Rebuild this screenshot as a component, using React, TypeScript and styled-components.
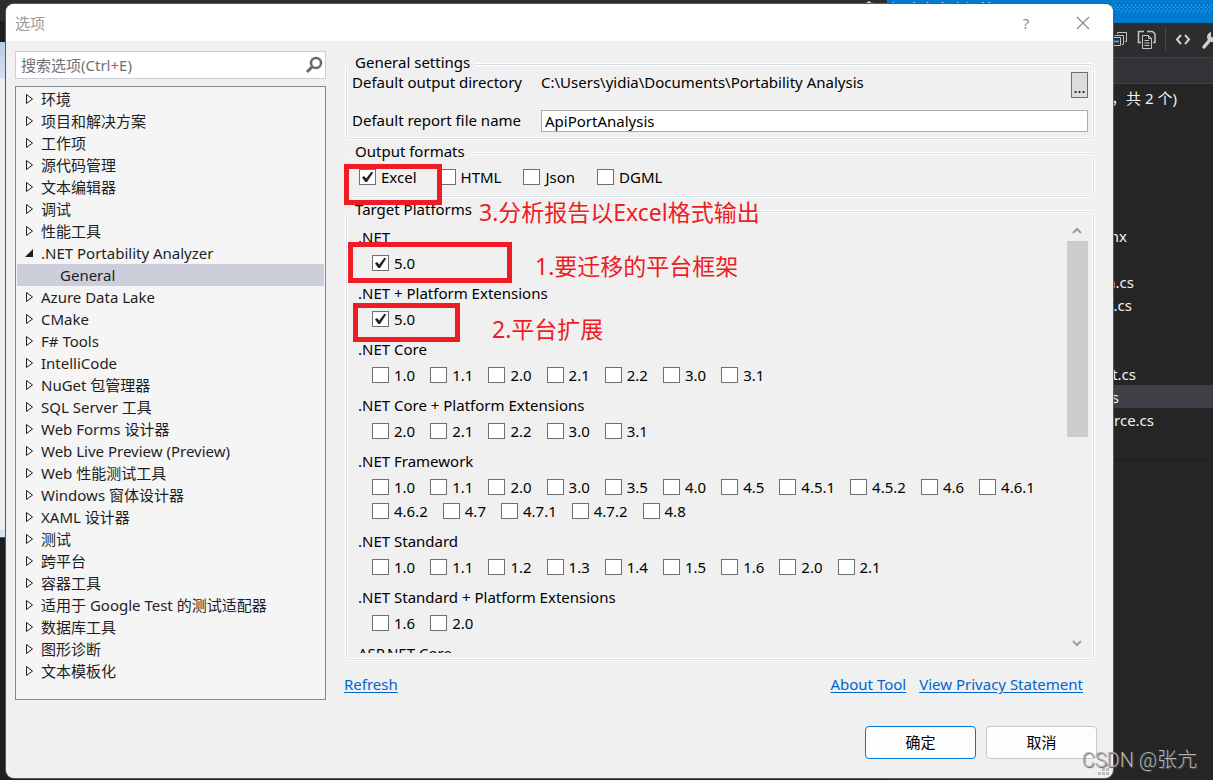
import React from "react";
import styled, { createGlobalStyle } from "styled-components";

const GlobalStyle = createGlobalStyle`
  * { box-sizing: border-box; }
  body {
    margin: 0;
    background: #1e1e1e;
    font: 15px/20px "Noto Sans", "Noto Sans CJK SC", sans-serif;
    color: #000;
  }
  button, input { font: inherit; color: inherit; }
`;

/* ---------- window behind the dialog ---------- */

const Desktop = styled.div`
  position: relative;
  display: flex;
  height: 100vh;
  min-height: 780px;
  overflow: hidden;
  background: #1e1e1e;
`;

const EditorEdge = styled.div`
  flex: 1;
  display: flex;
  flex-direction: column;
`;

const EdgeBand = styled.div<{ $h: number; $bg: string }>`
  height: ${(p) => p.$h}px;
  background: ${(p) => p.$bg};
`;

const GearSlot = styled.div`
  display: flex;
  justify-content: flex-end;
  height: 21px;
  padding-right: 11px;
  background: #2d2d30;
`;

const Explorer = styled.aside`
  width: 326px;
  display: flex;
  flex-direction: column;
  background: #252526;
  color: #f1f1f1;
`;

const ExplorerTitle = styled.div`
  display: flex;
  gap: 6px;
  height: 23px;
  padding-left: 3px;
  line-height: 18px;
  background: #007acc;
  color: #fff;
`;

const Grip = styled.div`
  flex: 1;
  height: 7px;
  margin-top: 5px;
  line-height: 0;
`;

const ExplorerTools = styled.div`
  display: flex;
  justify-content: flex-end;
  align-items: center;
  height: 35px;
  background: #2d2d30;
  border-bottom: 1px solid #3f3f46;
`;

const ExplorerSearch = styled.div`
  height: 26px;
  background: #333337;
  border-bottom: 1px solid #3f3f46;
`;

const FileList = styled.ul`
  list-style: none;
  margin: 0;
  padding: 2px 0 0;
  height: 376px;
  border-bottom: 1px solid #1b1b1c;
`;

const FileRow = styled.li<{ $end: number; $selected?: boolean }>`
  display: flex;
  justify-content: flex-end;
  height: 23px;
  line-height: 25px;
  padding-right: ${(p) => p.$end}px;
  white-space: pre;
  background: ${(p) => (p.$selected ? "#3f3f46" : "transparent")};
`;

/* ---------- dialog ---------- */

const Dialog = styled.section`
  position: absolute;
  inset: 4px 100px 2px 6px;
  display: flex;
  flex-direction: column;
  border-radius: 8px;
  background: #f0f0f0;
  box-shadow: 0 0 0 1px #5a5a5c;
`;

const TitleBar = styled.header`
  display: flex;
  align-items: center;
  height: 37px;
  padding: 0 16px 0 9px;
  border-radius: 8px 8px 0 0;
  background: #fff;
  color: #999;
`;

const DialogTitle = styled.h1`
  flex: 1;
  margin: 0;
  font-size: 15px;
  font-weight: 400;
`;

const CaptionButton = styled.button`
  display: grid;
  place-items: center;
  width: 28px;
  height: 28px;
  margin-left: 29px;
  padding: 0;
  border: 0;
  background: none;
  color: #8c8c8c;
`;

const Body = styled.div`
  flex: 1;
  display: flex;
  gap: 18px;
  min-height: 0;
  padding: 10px 19px 0 9px;
`;

const Side = styled.nav`
  display: flex;
  flex-direction: column;
  gap: 7px;
  width: 311px;
`;

const SearchBox = styled.label`
  display: flex;
  align-items: center;
  height: 28px;
  padding: 0 2px 0 5px;
  border: 1px solid #cccedb;
  background: #fff;
`;

const SearchInput = styled.input`
  flex: 1;
  min-width: 0;
  padding: 0;
  border: 0;
  outline: 0;
  background: none;
  &::placeholder { color: #717171; opacity: 1; }
`;

const Tree = styled.ul`
  flex: 1;
  list-style: none;
  margin: 0;
  padding: 1px;
  border: 1px solid #828790;
  background: #f5f5f5;
  color: #1e1e1e;
`;

const TreeRow = styled.li<{ $selected?: boolean; $child?: boolean }>`
  display: flex;
  align-items: center;
  gap: 6px;
  height: 22px;
  padding-left: ${(p) => (p.$child ? 43 : 7)}px;
  background: ${(p) => (p.$selected ? "#cccedb" : "transparent")};
  white-space: nowrap;
`;

const Main = styled.div`
  flex: 1;
  display: flex;
  flex-direction: column;
  gap: 6px;
  min-width: 0;
  padding-top: 5px;
`;

const Group = styled.fieldset<{ $fill?: boolean; $top?: number; $bottom?: number }>`
  display: flex;
  flex-direction: column;
  flex: ${(p) => (p.$fill ? "1" : "none")};
  min-width: 0;
  min-height: 0;
  margin: 0 0 0 2px;
  padding: ${(p) => p.$top ?? 0}px 5px ${(p) => p.$bottom ?? 6}px;
  border: 1px solid #d5dfe5;
  border-radius: 4px;
  box-shadow: 0 0 0 1px #fff, inset 0 0 0 1px #fff;
`;

const Legend = styled.legend`
  margin-left: -2px;
  padding: 0 5px 4px;
  line-height: 12px;
  background: #f0f0f0;
`;

const Settings = styled.div`
  display: grid;
  grid-template-columns: 189px 1fr;
  grid-template-rows: 26px 22px;
  row-gap: 12px;
`;

const PathLine = styled.div`
  display: flex;
  justify-content: space-between;
`;

const BrowseButton = styled.button`
  width: 17px;
  height: 26px;
  padding: 4px 0 0;
  border: 1px solid #707070;
  background: #ddd;
`;

const TextInput = styled.input`
  min-width: 0;
  height: 22px;
  padding: 0 3px;
  border: 1px solid #abadb3;
  border-radius: 0;
  outline: 0;
  background: #fff;
`;

const CheckRow = styled.div<{ $gap: number; $indent?: number }>`
  display: flex;
  flex-wrap: wrap;
  column-gap: ${(p) => p.$gap}px;
  padding-left: ${(p) => p.$indent ?? 0}px;
`;

const CheckLabel = styled.label`
  display: flex;
  align-items: center;
  gap: 5px;
  height: 24px;
`;

const CheckWrap = styled.span`
  display: grid;
  width: 17px;
  height: 16px;
  > * { grid-area: 1 / 1; }
  svg { display: none; pointer-events: none; }
  input:checked + svg { display: block; }
`;

const CheckInput = styled.input`
  appearance: none;
  width: 17px;
  height: 16px;
  margin: 0;
  border: 1px solid #707070;
  background: #fff;
`;

const Platforms = styled.div`
  flex: 1;
  display: flex;
  min-height: 0;
`;

const PlatformList = styled.div`
  flex: 1;
  min-width: 0;
  overflow: hidden;
  padding: 6px 0 0 6px;
`;

const Platform = styled.section`
  padding-bottom: 8px;
`;

const PlatformName = styled.h2`
  margin: 0 0 4px;
  font-size: 15px;
  font-weight: 400;
  line-height: 20px;
`;

const ScrollTrack = styled.div`
  display: flex;
  flex-direction: column;
  align-items: center;
  width: 21px;
`;

const ScrollArrow = styled.button`
  display: grid;
  place-items: center;
  width: 21px;
  height: 20px;
  padding: 0;
  border: 0;
  background: none;
`;

const ScrollSpace = styled.div`
  flex: 1;
  width: 21px;
`;

const ScrollThumb = styled.div`
  width: 21px;
  height: 196px;
  background: #cdcdcd;
`;

const Links = styled.div`
  display: flex;
  gap: 13px;
  padding: 8px 11px 6px 0;
`;

const Link = styled.a<{ $first?: boolean }>`
  color: #0066cc;
  margin-right: ${(p) => (p.$first ? "auto" : "0")};
  text-underline-offset: 2px;
`;

const Footer = styled.footer`
  display: flex;
  justify-content: flex-end;
  gap: 10px;
  padding: 26px 16px 19px;
`;

const DialogButton = styled.button<{ $primary?: boolean }>`
  width: 111px;
  height: 33px;
  padding: 0 0 2px;
  border: 1px solid ${(p) => (p.$primary ? "#0078d4" : "#c8c8c8")};
  border-radius: 4px;
  background: #fdfdfd;
`;

/* ---------- marks drawn over the dialog ---------- */

const Mark = styled.div<{ $x: number; $y: number; $w: number; $h: number }>`
  position: absolute;
  left: ${(p) => p.$x}px;
  top: ${(p) => p.$y}px;
  width: ${(p) => p.$w}px;
  height: ${(p) => p.$h}px;
  border: 5px solid #ee1c24;
  pointer-events: none;
`;

const Note = styled.div<{ $x: number; $y: number }>`
  position: absolute;
  left: ${(p) => p.$x}px;
  top: ${(p) => p.$y}px;
  font-size: 23px;
  line-height: 30px;
  white-space: nowrap;
  color: #ee1c24;
`;

const Watermark = styled.div`
  position: absolute;
  right: 16px;
  bottom: 6px;
  font-family: "Liberation Sans Narrow", "Roboto", "Noto Sans CJK SC", sans-serif;
  font-size: 20px;
  font-weight: 300;
  line-height: 28px;
  color: #b4b4b4;
  text-shadow: 1px 1px 1px #555;
`;

const ResizeGrip = styled.svg`
  position: absolute;
  right: 3px;
  bottom: 2px;
`;

const files: { name: string; end: number; selected?: boolean }[] = [
  { name: "，共 2 个)", end: 36 },
  { name: "", end: 0 },
  { name: "", end: 0 },
  { name: "", end: 0 },
  { name: "", end: 0 },
  { name: "", end: 0 },
  { name: "mx", end: 86 },
  { name: "", end: 0 },
  { name: "n.cs", end: 79 },
  { name: ".cs", end: 81 },
  { name: "", end: 0 },
  { name: "", end: 0 },
  { name: "t.cs", end: 77 },
  { name: "s", end: 94, selected: true },
  { name: "rce.cs", end: 59 },
];

const treeItems = [
  "环境", "项目和解决方案", "工作项", "源代码管理", "文本编辑器", "调试", "性能工具",
  ".NET Portability Analyzer", "General", "Azure Data Lake", "CMake", "F# Tools",
  "IntelliCode", "NuGet 包管理器", "SQL Server 工具", "Web Forms 设计器",
  "Web Live Preview (Preview)", "Web 性能测试工具", "Windows 窗体设计器", "XAML 设计器",
  "测试", "跨平台", "容器工具", "适用于 Google Test 的测试适配器", "数据库工具", "图形诊断", "文本模板化",
];

const platforms: { name: string; rows: string[][]; checked?: boolean }[] = [
  { name: ".NET", rows: [["5.0"]], checked: true },
  { name: ".NET + Platform Extensions", rows: [["5.0"]], checked: true },
  { name: ".NET Core", rows: [["1.0", "1.1", "2.0", "2.1", "2.2", "3.0", "3.1"]] },
  { name: ".NET Core + Platform Extensions", rows: [["2.0", "2.1", "2.2", "3.0", "3.1"]] },
  {
    name: ".NET Framework",
    rows: [
      ["1.0", "1.1", "2.0", "3.0", "3.5", "4.0", "4.5", "4.5.1", "4.5.2", "4.6", "4.6.1"],
      ["4.6.2", "4.7", "4.7.1", "4.7.2", "4.8"],
    ],
  },
  { name: ".NET Standard", rows: [["1.0", "1.1", "1.2", "1.3", "1.4", "1.5", "1.6", "2.0", "2.1"]] },
  { name: ".NET Standard + Platform Extensions", rows: [["1.6", "2.0"]] },
  { name: "ASP.NET Core", rows: [] },
];

function Check({ label, checked }: { label: string; checked?: boolean }) {
  return (
    <CheckLabel>
      <CheckWrap>
        <CheckInput type="checkbox" defaultChecked={checked} />
        <svg width="17" height="16" viewBox="0 0 17 16">
          <path d="M3 8.400 L5 7 L7.200 9.600 L12.400 2.800 L14.200 3.400 L8 13 H6.400 Z" fill="#212121" />
        </svg>
      </CheckWrap>
      {label}
    </CheckLabel>
  );
}

function Twisty({ open }: { open?: boolean }) {
  return (
    <svg width="11" height="12" viewBox="0 0 11 12">
      {open ? (
        <path d="M9 2 V10 H1 Z" fill="#1e1e1e" />
      ) : (
        <path d="M2.5 1.5 L8.5 6 L2.5 10.5 Z" fill="#fff" stroke="#1e1e1e" />
      )}
    </svg>
  );
}

function GripDots() {
  return (
    <Grip>
      <svg width="100%" height="7" aria-hidden="true">
        <defs>
          <pattern id="grip-dots" width="4" height="4" patternUnits="userSpaceOnUse">
            <path d="M0 0H1V1H0ZM2 2H3V3H2Z" fill="#59a8de" />
          </pattern>
        </defs>
        <rect width="100%" height="7" fill="url(#grip-dots)" />
      </svg>
    </Grip>
  );
}

function ToolIcons() {
  return (
    <svg width="104" height="34" viewBox="0 0 104 34" fill="none">
      <g stroke="#c5c5c5">
        <path d="M8.500 11V9.500H17.500V18.500H16M6 13V12.500H14.500V21.500H13" />
        <path d="M3.500 14.500H11.500V22.500H3.500Z" />
        <path d="M5 18.500H10" stroke="#3f9ce0" strokeWidth="2" />
        <path d="M32 19.500H29.500V8.500H35M38 8.500H43.500L46 11V19.500H44" strokeWidth="1.500" />
        <path d="M33.500 12.500H39.500L42.500 15.500V25.500H33.500Z" fill="#2d2d30" />
        <path d="M39.500 12.500V15.500H42.500M35.500 17.500H40M35.500 20H40.500M35.500 22.500H40.500" />
      </g>
      <path d="M56.500 4V28" stroke="#46464a" />
      <path d="M72 12L68 16.500L72 21M76 12L80 16.500L76 21" stroke="#d0d0d0" strokeWidth="2" />
      <path d="M95 24L100 18" stroke="#d0d0d0" strokeWidth="3.500" strokeLinecap="round" />
      <circle cx="103" cy="14" r="5" fill="#d0d0d0" />
      <path d="M103 8V13L104 14" stroke="#2d2d30" strokeWidth="2" />
    </svg>
  );
}

export default function App() {
  return (
    <>
      <GlobalStyle />
      <Desktop>
        <EditorEdge>
          <GearSlot>
            <svg width="14" height="14" viewBox="0 0 14 14">
              <circle cx="7" cy="7" r="4" fill="none" stroke="#d0d0d0" strokeWidth="2" />
              <path d="M7 1V13M1 7H13M3 3L11 11M11 3L3 11" stroke="#d0d0d0" strokeWidth="1.500" />
            </svg>
          </GearSlot>
          <EdgeBand $h={21} $bg="#1e1e1e" />
          <EdgeBand $h={37} $bg="linear-gradient(#b9cbdd, #d4e2f2)" />
          <EdgeBand $h={450} $bg="#f0f0f0" />
          <EdgeBand $h={8} $bg="#d6e4f3" />
          <EdgeBand $h={1} $bg="#55555a" />
        </EditorEdge>
        <Explorer>
          <ExplorerTitle>
            解决方案资源管理器
            <GripDots />
          </ExplorerTitle>
          <ExplorerTools>
            <ToolIcons />
          </ExplorerTools>
          <ExplorerSearch />
          <FileList>
            {files.map((f, i) => (
              <FileRow key={i} $end={f.end} $selected={f.selected}>
                {f.name}
              </FileRow>
            ))}
          </FileList>
        </Explorer>

        <Dialog role="dialog" aria-labelledby="dialog-title">
          <TitleBar>
            <DialogTitle id="dialog-title">选项</DialogTitle>
            <CaptionButton>?</CaptionButton>
            <CaptionButton aria-label="Close">
              <svg width="14" height="14" viewBox="0 0 14 14">
                <path d="M1 1L13 13M13 1L1 13" stroke="#8c8c8c" strokeWidth="1.200" />
              </svg>
            </CaptionButton>
          </TitleBar>

          <Body>
            <Side>
              <SearchBox>
                <SearchInput placeholder="搜索选项(Ctrl+E)" />
                <svg width="18" height="18" viewBox="0 0 18 18" fill="none" stroke="#6a6a6a">
                  <circle cx="11" cy="7" r="5" strokeWidth="2.500" />
                  <path d="M7.500 10.500L2 16" strokeWidth="3" />
                </svg>
              </SearchBox>
              <Tree>
                {treeItems.map((t) => {
                  const child = t === "General";
                  return (
                    <TreeRow key={t} $child={child} $selected={child}>
                      {!child && <Twisty open={t.startsWith(".NET")} />}
                      {t}
                    </TreeRow>
                  );
                })}
              </Tree>
            </Side>

            <Main>
              <Group>
                <Legend>General settings</Legend>
                <Settings>
                  <span>Default output directory</span>
                  <PathLine>
                    C:\Users\yidia\Documents\Portability Analysis
                    <BrowseButton>...</BrowseButton>
                  </PathLine>
                  <label htmlFor="report-name">Default report file name</label>
                  <TextInput id="report-name" defaultValue="ApiPortAnalysis" />
                </Settings>
              </Group>

              <Group $top={4} $bottom={7}>
                <Legend>Output formats</Legend>
                <CheckRow $gap={22} $indent={7}>
                  <Check label="Excel" checked />
                  <Check label="HTML" />
                  <Check label="Json" />
                  <Check label="DGML" />
                </CheckRow>
              </Group>

              <Group $fill $top={2}>
                <Legend>Target Platforms</Legend>
                <Platforms>
                  <PlatformList>
                    {platforms.map((p) => (
                      <Platform key={p.name}>
                        <PlatformName>{p.name}</PlatformName>
                        {p.rows.map((r, i) => (
                          <CheckRow key={i} $gap={15} $indent={14}>
                            {r.map((v) => (
                              <Check key={v} label={v} checked={p.checked} />
                            ))}
                          </CheckRow>
                        ))}
                      </Platform>
                    ))}
                  </PlatformList>
                  <ScrollTrack>
                    <ScrollArrow aria-label="Scroll up">
                      <svg width="11" height="8" viewBox="0 0 11 8" fill="none">
                        <path d="M1 6L5 2L9 6" stroke="#9c9c9c" strokeWidth="2" />
                      </svg>
                    </ScrollArrow>
                    <ScrollThumb />
                    <ScrollSpace />
                    <ScrollArrow aria-label="Scroll down">
                      <svg width="11" height="8" viewBox="0 0 11 8" fill="none">
                        <path d="M1 2L5 6L9 2" stroke="#9c9c9c" strokeWidth="2" />
                      </svg>
                    </ScrollArrow>
                  </ScrollTrack>
                </Platforms>
              </Group>

              <Links>
                <Link href="#refresh" $first>Refresh</Link>
                <Link href="#about">About Tool</Link>
                <Link href="#privacy">View Privacy Statement</Link>
              </Links>
            </Main>
          </Body>

          <Footer>
            <DialogButton $primary>确定</DialogButton>
            <DialogButton>取消</DialogButton>
          </Footer>

          <ResizeGrip width="12" height="12" viewBox="0 0 12 12" fill="#bdbdbd">
            <path d="M8 0h3v3H8zM4 4h3v3H4zM8 4h3v3H8zM0 8h3v3H0zM4 8h3v3H4zM8 8h3v3H8z" />
          </ResizeGrip>

          <Mark $x={338} $y={160} $w={98} $h={41} />
          <Mark $x={342} $y={238} $w={164} $h={41} />
          <Mark $x={347} $y={299} $w={107} $h={39} />
          <Note $x={473} $y={193}>3.分析报告以Excel格式输出</Note>
          <Note $x={529} $y={247}>1.要迁移的平台框架</Note>
          <Note $x={486} $y={310}>2.平台扩展</Note>
        </Dialog>

        <Watermark>CSDN @张亢</Watermark>
      </Desktop>
    </>
  );
}
